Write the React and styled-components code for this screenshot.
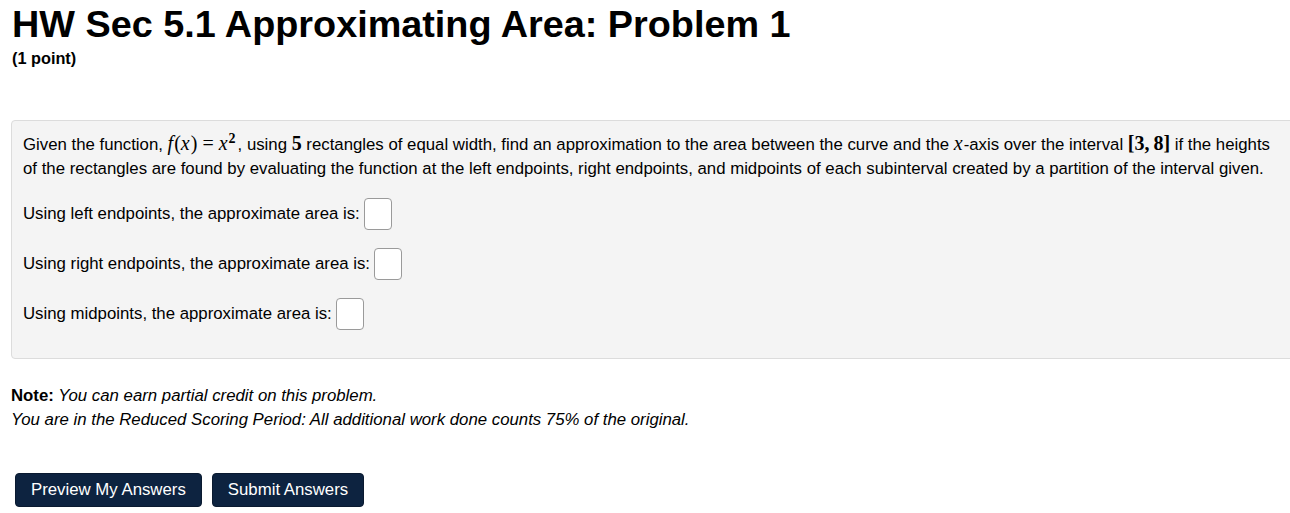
import React from "react"
import styled, { createGlobalStyle } from "styled-components"

const GlobalStyle = createGlobalStyle`
  html, body {
    margin: 0;
    padding: 0;
    background: #ffffff;
    overflow: hidden;
  }
  body {
    font-family: "Liberation Sans", Arial, sans-serif;
    color: #000000;
  }
`

const Page = styled.div`
  padding: 0 0 0 11px;
  width: 1300px;
`

const Header = styled.div`
  padding-left: 1px;
`

const Title = styled.h1`
  margin: 0;
  padding-top: 3px;
  font-size: 37.8px;
  line-height: 42px;
  font-weight: 700;
`

const Points = styled.div`
  margin-top: 3px;
  font-size: 16.3px;
  line-height: 20px;
  font-weight: 700;
`

const Problem = styled.div`
  margin-top: 52px;
  background: #f4f4f4;
  border: 1px solid #dcdcdc;
  border-radius: 4px;
  padding: 10px 11px 28px 11px;
  font-size: 16.8px;
  line-height: 24px;
`

const Paragraph = styled.p`
  margin: 0 0 17px 0;
  white-space: nowrap;
`

const Math = styled.span`
  font-family: "Liberation Serif", "DejaVu Serif", serif;
  font-size: 20px;
  font-style: ${(p) => (p.$upright ? "normal" : "italic")};
  font-weight: ${(p) => (p.$bold ? 700 : 400)};
  padding-right: ${(p) => (p.$upright ? 0 : 1)}px;
`

const Rel = styled.span`
  font-family: "Liberation Serif", "DejaVu Serif", serif;
  font-size: 20px;
  padding: 0 5px;
`

const Sup = styled.sup`
  font-family: "Liberation Serif", "DejaVu Serif", serif;
  font-size: 14px;
  line-height: 0;
  font-weight: 700;
  padding-right: 2px;
`

const AnswerRow = styled.div`
  display: flex;
  align-items: center;
  gap: 4px;
  height: 32px;
  margin-bottom: 18px;
  &:last-child {
    margin-bottom: 0;
  }
`

const AnswerBox = styled.input`
  box-sizing: border-box;
  width: 28px;
  height: 32px;
  border: 1px solid #9a9a9a;
  border-radius: 4px;
  background: #ffffff;
  padding: 0;
`

const Notes = styled.div`
  margin-top: 25px;
  font-size: 16.8px;
  line-height: 24px;
  font-style: italic;
  b {
    font-style: normal;
  }
`

const Buttons = styled.div`
  display: flex;
  gap: 10px;
  margin-top: 41px;
  padding-left: 4px;
`

const Button = styled.button`
  height: 34px;
  padding: 0 15px;
  background: #0d2340;
  color: #ffffff;
  border: 1px solid #0a1a30;
  border-radius: 4px;
  font-family: "Liberation Sans", Arial, sans-serif;
  font-size: 16.8px;
  cursor: pointer;
`

const rows = [
  "Using left endpoints, the approximate area is:",
  "Using right endpoints, the approximate area is:",
  "Using midpoints, the approximate area is:",
]

export default function App() {
  return (
    <>
      <GlobalStyle />
      <Page>
        <Header>
          <Title>HW Sec 5.1 Approximating Area: Problem 1</Title>
          <Points>(1 point)</Points>
        </Header>
        <Problem>
          <Paragraph>
            Given the function, <Math>f</Math>
            <Math $upright>(</Math>
            <Math>x</Math>
            <Math $upright>)</Math>
            <Rel>=</Rel>
            <Math>x</Math>
            <Sup>2</Sup>, using <Math $upright $bold>5</Math> rectangles of equal width, find an
            approximation to the area between the curve and the <Math>x</Math>-axis over the interval{" "}
            <Math $upright $bold>[3,&thinsp;8]</Math> if the heights
            <br />
            of the rectangles are found by evaluating the function at the left endpoints, right
            endpoints, and midpoints of each subinterval created by a partition of the interval given.
          </Paragraph>
          {rows.map((label) => (
            <AnswerRow key={label}>
              <span>{label}</span>
              <AnswerBox type="text" aria-label={label} />
            </AnswerRow>
          ))}
        </Problem>
        <Notes>
          <b>Note:</b> You can earn partial credit on this problem.
          <br />
          You are in the Reduced Scoring Period: All additional work done counts 75% of the original.
        </Notes>
        <Buttons>
          <Button>Preview My Answers</Button>
          <Button>Submit Answers</Button>
        </Buttons>
      </Page>
    </>
  )
}
